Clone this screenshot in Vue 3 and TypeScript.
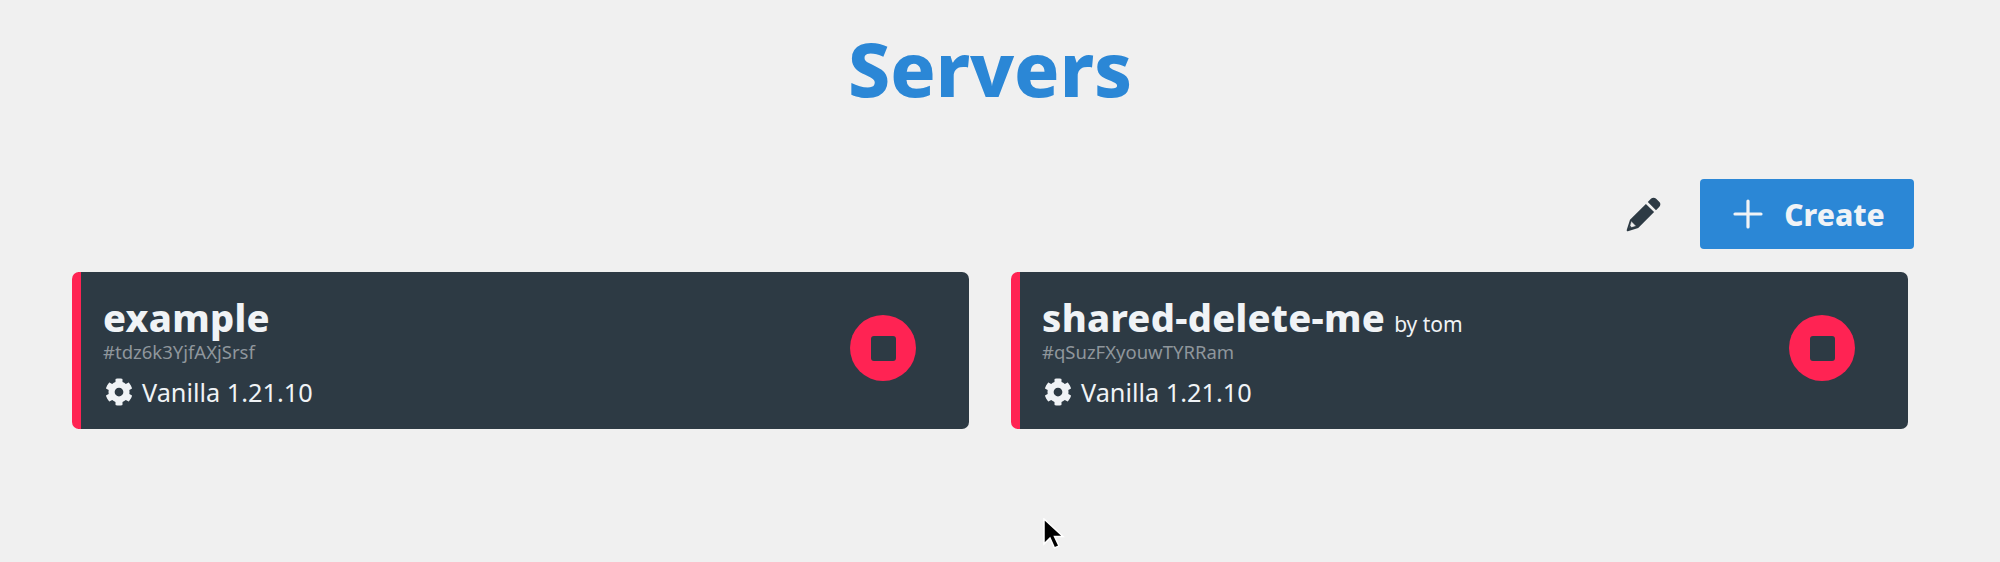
<script setup lang="ts">
interface Server {
  name: string
  owner?: string
  id: string
  version: string
}

const servers: Server[] = [
  { name: 'example', id: '#tdz6k3YjfAXjSrsf', version: 'Vanilla 1.21.10' },
  { name: 'shared-delete-me', owner: 'by tom', id: '#qSuzFXyouwTYRRam', version: 'Vanilla 1.21.10' },
]
</script>

<template>
  <main class="page">
    <h1 class="title">Servers</h1>
    <div class="toolbar">
      <button class="edit" type="button" aria-label="Edit">
        <svg viewBox="0 0 36 36" width="36" height="36">
          <path fill="#2d3a44" d="M25.200 2.600c1.300-1.300 3.400-1.300 4.700 0l3.500 3.500c1.300 1.300 1.300 3.400 0 4.700l-3.400 3.400-8.200-8.200zM19.900 7.900l8.200 8.200-15.900 15.900-10.300 3.200c-.8.200-1.400-.5-1.200-1.200l3.300-10.200zM5.700 26.500l-1.500 4.800 4.700-1.500z"/>
          <path fill="#f0f0f0" d="M5.300 25.300l-1.900 6.600 6.600-1.900z" opacity=".75"/>
          <path fill="#2d3a44" d="M3.900 29.500l-.8 2.800 2.800-.8z"/>
        </svg>
      </button>
      <button class="create" type="button">
        <svg viewBox="0 0 30 30" width="30" height="30">
          <path d="M15 2v26M2 15h26" stroke="#f0f3f6" stroke-width="3.200" stroke-linecap="round" fill="none"/>
        </svg>
        <span>Create</span>
      </button>
    </div>
    <section class="grid">
      <article v-for="s in servers" :key="s.id" class="card">
        <div class="info">
          <div class="name">{{ s.name }}<span v-if="s.owner" class="owner">{{ s.owner }}</span></div>
          <div class="id">{{ s.id }}</div>
          <div class="version">
            <svg viewBox="0 0 512 512" width="28" height="28">
              <path fill="#f0f3f6" d="M487.400 315.700l-42.600-24.600c4.300-23.200 4.300-47 0-70.200l42.600-24.600c4.900-2.800 7.100-8.600 5.500-14-11.100-35.600-30-67.800-54.700-94.600-3.800-4.100-10-5.100-14.800-2.300L380.800 110c-17.900-15.400-38.500-27.300-60.800-35.100V25.800c0-5.600-3.900-10.500-9.400-11.700-36.700-8.200-74.300-7.800-109.200 0-5.500 1.200-9.400 6.100-9.400 11.700V75c-22.200 7.900-42.800 19.800-60.800 35.100L88.700 85.500c-4.900-2.800-11-1.900-14.800 2.300-24.700 26.700-43.600 58.900-54.700 94.600-1.700 5.400.6 11.200 5.500 14L67.300 221c-4.300 23.200-4.300 47 0 70.200l-42.600 24.600c-4.900 2.800-7.100 8.600-5.500 14 11.100 35.600 30 67.800 54.700 94.600 3.800 4.100 10 5.100 14.800 2.300l42.600-24.600c17.900 15.400 38.500 27.300 60.800 35.100v49.200c0 5.600 3.900 10.500 9.400 11.700 36.700 8.200 74.300 7.800 109.200 0 5.500-1.200 9.400-6.100 9.400-11.700v-49.200c22.200-7.900 42.800-19.800 60.800-35.100l42.600 24.600c4.900 2.800 11 1.900 14.800-2.300 24.700-26.700 43.600-58.900 54.700-94.600 1.500-5.500-.7-11.300-5.600-14.100zM256 336c-44.100 0-80-35.900-80-80s35.900-80 80-80 80 35.900 80 80-35.900 80-80 80z"/>
            </svg>
            <span>{{ s.version }}</span>
          </div>
        </div>
        <button class="stop" type="button" aria-label="Stop"><span class="square"></span></button>
      </article>
    </section>
    <svg class="cursor" viewBox="0 0 24 32" width="24" height="32">
      <path d="M2 1v25l6-6 4.500 10 4.500-2-4.500-9.500H21z" fill="#000" stroke="#fff" stroke-width="1.500"/>
    </svg>
  </main>
</template>

<style>
html, body { margin: 0; background: #f0f0f0; }
</style>

<style scoped>
.page {
  position: relative;
  box-sizing: border-box;
  height: 562px;
  padding: 0 92px 0 72px;
  overflow: hidden;
  background: #f0f0f0;
  font-family: "Noto Sans", "Open Sans", sans-serif;
}
.title {
  margin: 0;
  padding-top: 20px;
  height: 179px;
  box-sizing: border-box;
  text-align: center;
  font-size: 75px;
  line-height: 96px;
  font-weight: 800;
  color: #2b87d6;
}
.toolbar {
  display: flex;
  justify-content: flex-end;
  align-items: center;
  gap: 38px;
  height: 70px;
  margin-right: -6px;
  margin-bottom: 23px;
}
.edit {
  display: flex;
  padding: 0;
  border: 0;
  background: none;
}
.create {
  display: flex;
  align-items: center;
  justify-content: center;
  gap: 21px;
  box-sizing: border-box;
  width: 214px;
  height: 70px;
  padding: 0 0 0 4px;
  border: 0;
  border-radius: 4px;
  background: #2b87d6;
  color: #f0f3f6;
  font: 800 30px "Noto Sans", sans-serif;
}
.grid {
  display: grid;
  grid-template-columns: 897px 897px;
  gap: 42px;
}
.card {
  display: flex;
  align-items: center;
  justify-content: space-between;
  box-sizing: border-box;
  height: 157px;
  padding: 0 53px 0 22px;
  border-left: 9px solid #ff2353;
  border-radius: 7px;
  background: #2d3a44;
  color: #f0f3f6;
}
.info {
  display: flex;
  flex-direction: column;
  padding-top: 2px;
}
.name {
  height: 46px;
  font-size: 38px;
  line-height: 46px;
  font-weight: 800;
  letter-spacing: 0.300px;
  white-space: nowrap;
}
.owner {
  margin-left: 9px;
  font-size: 21px;
  line-height: 1;
  font-weight: 400;
  letter-spacing: 0;
}
.id {
  margin-top: 1px;
  font-size: 18.500px;
  line-height: 22px;
  color: #8f969c;
}
.version {
  display: flex;
  align-items: center;
  gap: 9px;
  margin-top: 12px;
  margin-left: 2px;
  font-size: 25.300px;
  line-height: 34px;
}
.stop {
  display: flex;
  align-items: center;
  justify-content: center;
  width: 66px;
  height: 66px;
  margin-bottom: 5px;
  padding: 0;
  border: 0;
  border-radius: 50%;
  background: #ff2353;
}
.square {
  width: 25px;
  height: 25px;
  border-radius: 3px;
  background: #2d3a44;
}
.cursor {
  position: absolute;
  left: 1042px;
  top: 518px;
}
</style>
